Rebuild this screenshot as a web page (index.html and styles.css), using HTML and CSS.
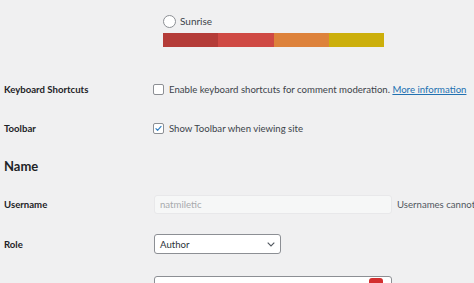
FILE: index.html
```html
<!DOCTYPE html>
<html>
<head>
<meta charset="utf-8">
<link rel="stylesheet" href="styles.css">
</head>
<body>
<div class="page">
  <div class="scheme">
    <label class="radio-line"><span class="radio"></span><span class="radio-text">Sunrise</span></label>
    <div class="palette">
      <span class="sw s1"></span><span class="sw s2"></span><span class="sw s3"></span><span class="sw s4"></span>
    </div>
  </div>

  <div class="row r-kbd">
    <div class="label">Keyboard Shortcuts</div>
    <div class="field">
      <span class="checkbox"></span>
      <span class="ctext">Enable keyboard shortcuts for comment moderation. <a class="link" href="#">More information</a></span>
    </div>
  </div>

  <div class="row r-toolbar">
    <div class="label">Toolbar</div>
    <div class="field">
      <span class="checkbox checked">
        <svg viewBox="0 0 12 12" width="11" height="11"><path d="M2.6 6.2 L4.8 8.6 L9.4 3.2" fill="none" stroke="#3582c4" stroke-width="1.6" stroke-linecap="round" stroke-linejoin="round"/></svg>
      </span>
      <span class="ctext">Show Toolbar when viewing site</span>
    </div>
  </div>

  <h2 class="heading">Name</h2>

  <div class="row r-user">
    <div class="label">Username</div>
    <div class="field">
      <div class="input disabled">natmiletic</div>
      <span class="desc">Usernames cannot be changed.</span>
    </div>
  </div>

  <div class="row r-role">
    <div class="label">Role</div>
    <div class="field">
      <div class="select">
        <span>Author</span>
        <svg viewBox="0 0 8 5" width="8" height="5"><path d="M0.7 0.7 L4 4 L7.3 0.7" fill="none" stroke="#50575e" stroke-width="1.1"/></svg>
      </div>
    </div>
  </div>

  <div class="row r-last">
    <div class="label"></div>
    <div class="field top">
      <div class="input blank"><span class="pm-icon"></span></div>
    </div>
  </div>
</div>
</body>
</html>
```

FILE: styles.css
```css
html, body {
  margin: 0;
  padding: 0;
  background: #f0f0f1;
  overflow: hidden;
  width: 474px;
  height: 283px;
}
body {
  font-family: "Lato", "Noto Sans", sans-serif;
  font-size: 9.6px;
  color: #1d2327;
}
.page {
  padding-left: 4px;
  white-space: nowrap;
}
.scheme {
  height: 70px;
  padding-left: 159px;
  box-sizing: border-box;
  padding-top: 15px;
}
.radio-line {
  display: flex;
  align-items: center;
  height: 12px;
}
.radio {
  width: 11px;
  height: 11px;
  border: 1px solid #8c8f94;
  border-radius: 50%;
  background: #fff;
  display: inline-block;
}
.radio-text {
  margin-left: 4px;
  font-size: 10px;
  color: #3c434a;
}
.palette {
  display: flex;
  margin-top: 6px;
  width: 221px;
  height: 14px;
}
.sw { flex: 1; }
.s1 { background: #b43c38; }
.s2 { background: #cf4944; }
.s3 { background: #dd823b; }
.s4 { background: #ccaf0b; }

.row {
  display: flex;
  align-items: center;
}
.label {
  width: 150px;
  flex: none;
  font-weight: 700;
  color: #1d2327;
}
.field {
  display: flex;
  align-items: center;
}
.field.top { align-self: flex-start; }
.r-kbd { height: 38px; }
.r-toolbar { height: 40px; }
.r-user { height: 40px; }
.r-role { height: 40px; }
.r-last { height: 30px; align-items: flex-start; padding-top: 12px; }

.checkbox {
  width: 11px;
  height: 11px;
  border: 1px solid #8c8f94;
  border-radius: 2px;
  background: #fff;
  margin-left: -1px;
  box-sizing: border-box;
  display: inline-flex;
  align-items: center;
  justify-content: center;
}
.checkbox svg { display: block; }
.ctext {
  margin-left: 5px;
  color: #3c434a;
}
.link {
  color: #2271b1;
  text-decoration: underline;
}
.heading {
  margin: 0;
  height: 36px;
  display: flex;
  align-items: center;
  font-size: 13px;
  font-weight: 700;
  color: #1d2327;
}
.input {
  height: 19px;
  box-sizing: border-box;
  border: 1px solid #8c8f94;
  border-radius: 3px;
  background: #fff;
  display: flex;
  align-items: center;
  padding-left: 5px;
  width: 238px;
}
.input.disabled {
  background: #f6f7f7;
  border-color: #e8e8ea;
  color: #a7aaad;
}
.desc {
  margin-left: 5px;
  color: #50575e;
}
.select {
  width: 127px;
  height: 20px;
  box-sizing: border-box;
  border: 1px solid #8c8f94;
  border-radius: 3px;
  background: #fff;
  display: flex;
  align-items: center;
  justify-content: space-between;
  padding: 0 5px 0 5px;
  color: #2c3338;
}
.input.blank {
  position: relative;
  height: 22px;
}
.pm-icon {
  position: absolute;
  left: 214px;
  top: 1px;
  width: 14px;
  height: 16px;
  border-radius: 3px;
  background: #d32f2f;
}
```
